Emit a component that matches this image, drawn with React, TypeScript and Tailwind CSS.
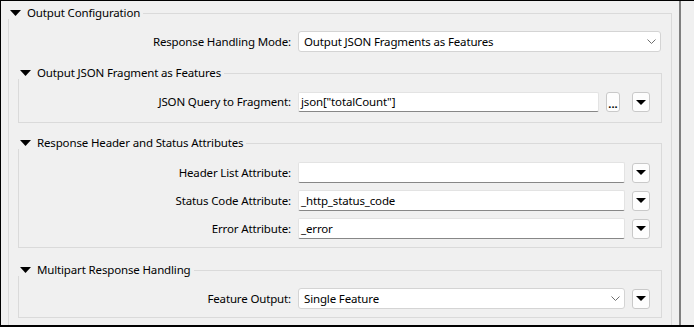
import React from "react";

// small black "collapse" triangle used in the group headers and drop buttons
function Tri({ w = 11, h = 6 }: { w?: number; h?: number }) {
  return (
    <svg width={w} height={h} viewBox={`0 0 ${w} ${h}`} className="block shrink-0">
      <path d={`M0 0H${w}L${w / 2} ${h}Z`} fill="#000" />
    </svg>
  );
}

function Chevron() {
  return (
    <svg width="9" height="5" viewBox="0 0 9 5" className="block shrink-0">
      <path d="M0.5 0.5L4.5 4.5L8.5 0.5" fill="none" stroke="#6e6e6e" strokeWidth="1" />
    </svg>
  );
}

function Header({ title }: { title: string }) {
  return (
    <div className="flex h-[12px] items-center">
      <span className="ml-[2px]">
        <Tri />
      </span>
      <span className="ml-[6px] whitespace-nowrap leading-[12px]">{title}</span>
      <div className="ml-[3px] h-[6px] flex-1 self-end border-t border-r border-[#dadada]" />
    </div>
  );
}

function Label({ text, wide }: { text: string; wide?: boolean }) {
  return (
    <div className={(wide ? "w-[282px]" : "w-[272px]") + " shrink-0 whitespace-nowrap text-right"}>
      {text}
    </div>
  );
}

function TextBox({ value, width }: { value: string; width: string }) {
  return (
    <div
      className={
        width +
        " flex h-full shrink-0 items-center rounded-[2px] border border-[#e3e3e3] border-b-[#878787] bg-white pl-[2px] whitespace-nowrap"
      }
    >
      {value}
    </div>
  );
}

function Select({ value, width }: { value: string; width: string }) {
  return (
    <div
      className={
        width +
        " flex h-full shrink-0 items-center justify-between rounded-[3px] border border-[#d4d4d4] bg-white pl-[5px] pr-[4px] whitespace-nowrap"
      }
    >
      <span>{value}</span>
      <Chevron />
    </div>
  );
}

function DropButton() {
  return (
    <div className="flex h-[20px] w-[18px] shrink-0 items-center justify-center rounded-[3px] border border-[#c9c9c9] bg-[#fdfdfd]">
      <Tri w={10} h={5} />
    </div>
  );
}

function EllipsisButton() {
  return (
    <div className="flex h-[20px] w-[14px] shrink-0 items-end justify-center rounded-[3px] border border-[#c9c9c9] bg-[#fdfdfd] pb-[2px] text-[11px] font-bold leading-[10px] tracking-normal">
      ...
    </div>
  );
}

export default function App() {
  return (
    <div className="flex h-[327px] w-[694px] overflow-hidden border-t border-b-2 border-l border-black bg-[#f0f0f0] font-['Noto_Sans',sans-serif] text-[11.5px] tracking-[-0.15px] text-black">
      <div className="w-[678px] shrink-0 pt-[6px] pl-[7px]">
        <div className="w-[664px]">
          <Header title="Output Configuration" />
          <div className="border-x border-[#dadada] pt-[12px] pb-[40px]">
            <div className="flex h-[21px] items-center">
              <Label text="Response Handling Mode:" wide />
              <div className="ml-[7px] h-full">
                <Select value="Output JSON Fragments as Features" width="w-[363px]" />
              </div>
            </div>

            <div className="mx-[9px] mt-[15px]">
              <Header title="Output JSON Fragment as Features" />
              <div className="border-x border-b border-[#dadada] pt-[13px] pb-[10px]">
                <div className="flex h-[20px] items-center">
                  <Label text="JSON Query to Fragment:" />
                  <div className="ml-[7px] h-full">
                    <TextBox value='json["totalCount"]' width="w-[301px]" />
                  </div>
                  <div className="ml-[7px]">
                    <EllipsisButton />
                  </div>
                  <div className="ml-[12px]">
                    <DropButton />
                  </div>
                </div>
              </div>
            </div>

            <div className="mx-[9px] mt-[14px]">
              <Header title="Response Header and Status Attributes" />
              <div className="flex flex-col gap-[7px] border-x border-b border-[#dadada] pt-[13px] pb-[8px]">
                {[
                  ["Header List Attribute:", ""],
                  ["Status Code Attribute:", "_http_status_code"],
                  ["Error Attribute:", "_error"],
                ].map(([label, value]) => (
                  <div key={label} className="flex h-[21px] items-center">
                    <Label text={label} />
                    <div className="ml-[7px] h-full">
                      <TextBox value={value} width="w-[327px]" />
                    </div>
                    <div className="ml-[7px]">
                      <DropButton />
                    </div>
                  </div>
                ))}
              </div>
            </div>

            <div className="mx-[9px] mt-[16px]">
              <Header title="Multipart Response Handling" />
              <div className="border-x border-b border-[#dadada] pt-[12px] pb-[8px]">
                <div className="flex h-[21px] items-center">
                  <Label text="Feature Output:" />
                  <div className="ml-[7px] h-full">
                    <Select value="Single Feature" width="w-[327px]" />
                  </div>
                  <div className="ml-[7px]">
                    <DropButton />
                  </div>
                </div>
              </div>
            </div>
          </div>
        </div>
      </div>
      <div className="w-[2px] shrink-0 bg-[#7f7f7f]" />
      <div className="flex-1" />
    </div>
  );
}
